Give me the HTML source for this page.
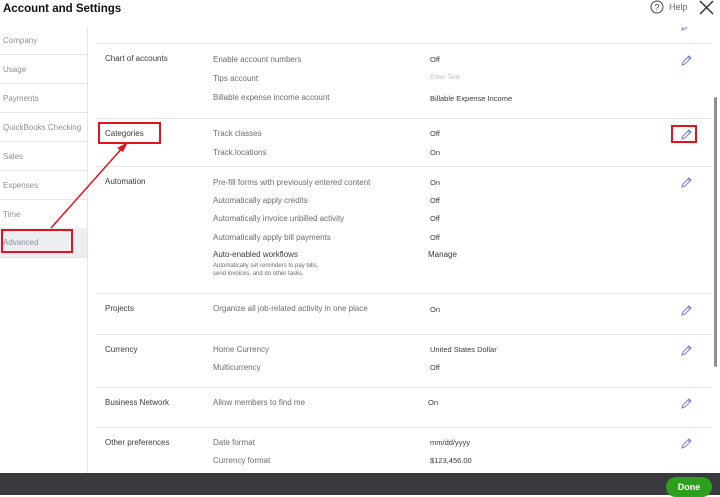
<!DOCTYPE html>
<html><head><style>
*{margin:0;padding:0;box-sizing:border-box}
body{width:720px;height:495px;overflow:hidden;background:#fff;font-family:"Liberation Sans",sans-serif;color:#393a3d;position:relative}
.a{position:absolute;white-space:nowrap;font-size:8px}
.s{color:#6b6c72;font-size:8px}
.hl{position:absolute;left:96px;width:616px;height:1px;background:#e3e5e8}
.sl{position:absolute;left:0;width:87px;height:1px;background:#e3e5e8}
.v{font-size:7.5px;color:#393a3d}
.p{position:absolute;left:680px;width:12px;height:12px}
</style></head><body>
<div class="a" style="left:3px;top:3px;font-size:11.5px;font-weight:bold;color:#111">Account and Settings</div>
<svg style="position:absolute;left:650px;top:0" width="14" height="14" viewBox="0 0 14 14"><circle cx="7" cy="7" r="6" fill="none" stroke="#444" stroke-width="1"/><text x="7" y="10.5" font-size="9" text-anchor="middle" fill="#444" font-family="Liberation Sans">?</text></svg>
<div class="a" style="left:669px;top:2px;font-size:9px;color:#666">Help</div>
<svg style="position:absolute;left:699px;top:0" width="15" height="15"><path d="M1 1L14 14M14 1L1 14" stroke="#333" stroke-width="1.5"/></svg>
<div class="a" style="left:105px;top:18px;font-size:8px;color:#393a3d;height:7px;overflow:hidden;line-height:4px">&nbsp;</div>
<div style="position:absolute;left:87px;top:27px;width:1px;height:446px;background:#e3e5e8"></div>
<div style="position:absolute;left:0;top:228px;width:87px;height:29px;background:#eceef1"></div>
<div class="a s" style="left:3px;top:36px;color:#8d9096">Company</div><div class="sl" style="top:54px"></div>
<div class="a s" style="left:3px;top:65px;color:#8d9096">Usage</div><div class="sl" style="top:83px"></div>
<div class="a s" style="left:3px;top:94px;color:#8d9096">Payments</div><div class="sl" style="top:112px"></div>
<div class="a s" style="left:3px;top:123px;color:#8d9096">QuickBooks Checking</div><div class="sl" style="top:141px"></div>
<div class="a s" style="left:3px;top:152px;color:#8d9096">Sales</div><div class="sl" style="top:170px"></div>
<div class="a s" style="left:3px;top:181px;color:#8d9096">Expenses</div><div class="sl" style="top:199px"></div>
<div class="a s" style="left:3px;top:210px;color:#8d9096">Time</div>
<div class="a s" style="left:3px;top:238px;color:#8d9096">Advanced</div><div class="sl" style="top:257px"></div>
<div class="hl" style="top:43px"></div>
<div class="a" style="left:105px;top:54px">Chart of accounts</div>
<div class="a s" style="left:213px;top:55px">Enable account numbers</div>
<div class="a s" style="left:213px;top:74px">Tips account</div>
<div class="a s" style="left:213px;top:93px">Billable expense income account</div>
<div class="a v" style="left:430px;top:55px">Off</div>
<div class="a" style="left:430px;top:74px;font-size:6.5px;color:#bbb;font-style:italic">Enter Text</div>
<div class="a v" style="left:430px;top:94px">Billable Expense Income</div>
<div class="hl" style="top:118px"></div>
<div class="a" style="left:105px;top:129px">Categories</div>
<div class="a s" style="left:213px;top:129px">Track classes</div>
<div class="a s" style="left:213px;top:148px">Track locations</div>
<div class="a v" style="left:430px;top:129px">Off</div>
<div class="a v" style="left:430px;top:148px">On</div>
<div class="hl" style="top:166px"></div>
<div class="a" style="left:105px;top:177px">Automation</div>
<div class="a s" style="left:213px;top:178px">Pre-fill forms with previously entered content</div>
<div class="a s" style="left:213px;top:196px">Automatically apply credits</div>
<div class="a s" style="left:213px;top:214px">Automatically invoice unbilled activity</div>
<div class="a s" style="left:213px;top:233px">Automatically apply bill payments</div>
<div class="a" style="left:213px;top:250px">Auto-enabled workflows</div>
<div class="a s" style="left:213px;top:263px;font-size:6px">Automatically set reminders to pay bills,</div>
<div class="a s" style="left:213px;top:271px;font-size:6px">send invoices, and do other tasks.</div>
<div class="a v" style="left:430px;top:178px">On</div>
<div class="a v" style="left:430px;top:196px">Off</div>
<div class="a v" style="left:430px;top:214px">Off</div>
<div class="a v" style="left:430px;top:233px">Off</div>
<div class="a" style="left:428px;top:250px">Manage</div>
<div class="hl" style="top:293px"></div>
<div class="a" style="left:105px;top:304px">Projects</div>
<div class="a s" style="left:213px;top:304px">Organize all job-related activity in one place</div>
<div class="a v" style="left:430px;top:305px">On</div>
<div class="hl" style="top:334px"></div>
<div class="a" style="left:105px;top:345px">Currency</div>
<div class="a s" style="left:213px;top:345px">Home Currency</div>
<div class="a s" style="left:213px;top:363px">Multicurrency</div>
<div class="a v" style="left:430px;top:345px">United States Dollar</div>
<div class="a v" style="left:430px;top:363px">Off</div>
<div class="hl" style="top:387px"></div>
<div class="a" style="left:105px;top:398px">Business Network</div>
<div class="a s" style="left:213px;top:398px">Allow members to find me</div>
<div class="a v" style="left:428px;top:398px">On</div>
<div class="hl" style="top:427px"></div>
<div class="a" style="left:105px;top:438px">Other preferences</div>
<div class="a s" style="left:213px;top:438px">Date format</div>
<div class="a s" style="left:213px;top:456px">Currency format</div>
<div class="a v" style="left:430px;top:438px">mm/dd/yyyy</div>
<div class="a v" style="left:430px;top:456px">$123,456.00</div>
<svg width="0" height="0"><defs><g id="pc"><path d="M2 11L3 8L9 2L11 4L5 10Z M8 3L10 5" fill="none" stroke="#6b7fc4" stroke-width="1"/></g></defs></svg>
<svg class="p" style="top:19px"><use href="#pc"/></svg>
<svg class="p" style="top:54px"><use href="#pc"/></svg>
<svg class="p" style="top:128px"><use href="#pc"/></svg>
<svg class="p" style="top:176px"><use href="#pc"/></svg>
<svg class="p" style="top:304px"><use href="#pc"/></svg>
<svg class="p" style="top:344px"><use href="#pc"/></svg>
<svg class="p" style="top:397px"><use href="#pc"/></svg>
<svg class="p" style="top:437px"><use href="#pc"/></svg>
<div style="position:absolute;left:0;top:0;width:720px;height:27px;background:#fff"></div>
<div class="a" style="left:3px;top:3px;font-size:11.5px;font-weight:bold;color:#111">Account and Settings</div>
<svg style="position:absolute;left:650px;top:0" width="14" height="14" viewBox="0 0 14 14"><circle cx="7" cy="7" r="6" fill="none" stroke="#444" stroke-width="1"/><text x="7" y="10.5" font-size="9" text-anchor="middle" fill="#444" font-family="Liberation Sans">?</text></svg>
<div class="a" style="left:669px;top:2px;font-size:9px;color:#666">Help</div>
<svg style="position:absolute;left:699px;top:0" width="15" height="15"><path d="M1 1L14 14M14 1L1 14" stroke="#333" stroke-width="1.5"/></svg>
<div style="position:absolute;left:714px;top:97px;width:3px;height:270px;background:#8d9096;border-radius:2px"></div>
<div style="position:absolute;left:98px;top:122px;width:63px;height:22px;border:2px solid #e0141e"></div>
<div style="position:absolute;left:1px;top:229px;width:72px;height:24px;border:2px solid #e0141e"></div>
<div style="position:absolute;left:671px;top:125px;width:26px;height:18px;border:2px solid #e0141e"></div>
<svg style="position:absolute;left:0;top:0" width="720" height="495"><path d="M51 228L124 146" stroke="#e0141e" stroke-width="1.5"/><path d="M128 142L117 148L123 152Z" fill="#e0141e"/></svg>
<div style="position:absolute;left:0;top:473px;width:720px;height:22px;background:#393a3d"></div>
<div style="position:absolute;left:666px;top:477px;width:46px;height:20px;border-radius:10px;background:#2ca01c;color:#fff;font-size:9px;font-weight:bold;text-align:center;line-height:20px">Done</div>
</body></html>
